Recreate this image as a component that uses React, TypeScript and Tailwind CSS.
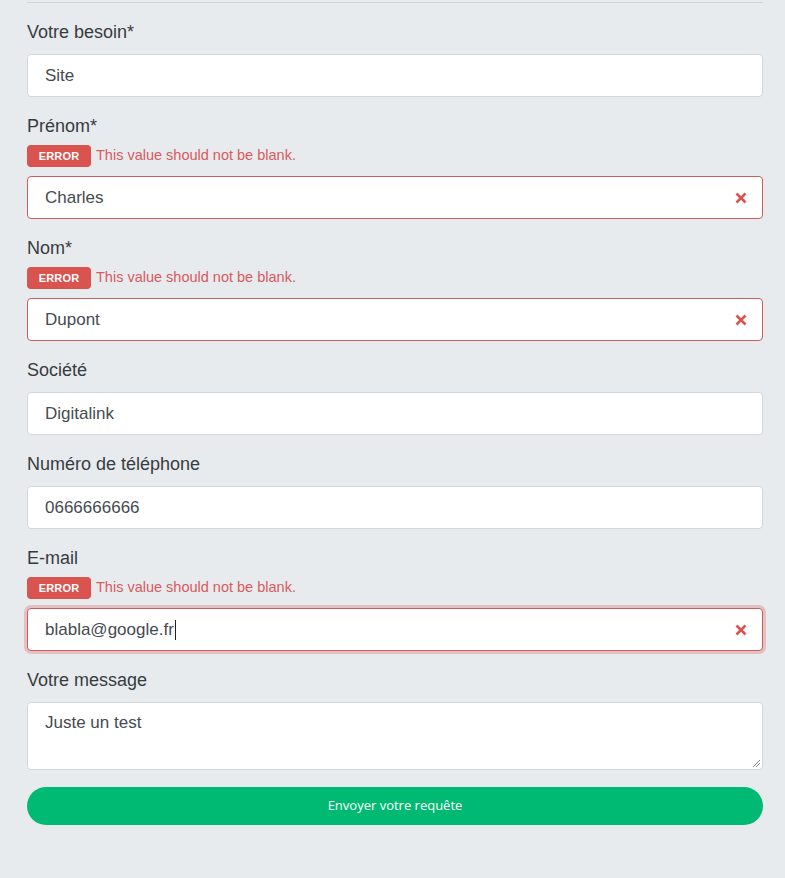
import React from "react";

const XIcon = () => (
  <svg width="12" height="12" viewBox="0 0 12 12" className="shrink-0">
    <path d="M1.5 1.5 L10.5 10.5 M10.5 1.5 L1.5 10.5" stroke="#d9534f" strokeWidth="2.6" strokeLinecap="butt" />
  </svg>
);

type FieldProps = {
  label: string;
  value: string;
  error?: boolean;
  focus?: boolean;
  caret?: boolean;
};

const Field = ({ label, value, error, focus, caret }: FieldProps) => (
  <div className="mb-[17px]">
    <div className={`text-[18px] leading-[24px] text-[#373b3f] ${error ? "mb-[7px]" : "mb-[10px]"}`}>{label}</div>
    {error && (
      <div className="flex items-center mb-[9px] h-[22px]">
        <span className="inline-flex items-center justify-center w-[64px] h-[22px] rounded-[4px] bg-[#d9534f] text-white text-[11px] font-bold tracking-[0.2px]">
          ERROR
        </span>
        <span className="ml-[5px] text-[14.5px] text-[#d75a5f]">This value should not be blank.</span>
      </div>
    )}
    <div
      className={`flex items-center h-[43px] rounded-[4px] bg-white pl-[17px] pr-[15px] border ${
        error ? "border-[#cf5b5b]" : "border-[#d3d7db]"
      } ${focus ? "shadow-[0_0_0_3px_rgba(217,83,79,0.28)]" : ""}`}
    >
      <span className="flex-1 text-[17px] text-[#464b50] flex items-center">
        {value}
        {caret && <span className="inline-block w-[1px] h-[20px] bg-[#222] ml-[1px]" />}
      </span>
      {error && <XIcon />}
    </div>
  </div>
);

export default function App() {
  return (
    <div className="min-h-[878px] bg-[#e8ebee] pl-[27px] pr-[22px] pt-[2px] pb-[40px] font-['Liberation_Sans',Arial,sans-serif]">
      <div className="h-[1px] bg-[#d3d6d9] mb-[17px]" />
      <Field label="Votre besoin*" value="Site" />
      <Field label="Prénom*" value="Charles" error />
      <Field label="Nom*" value="Dupont" error />
      <Field label="Société" value="Digitalink" />
      <Field label="Numéro de téléphone" value="0666666666" />
      <Field label="E-mail" value="blabla@google.fr" error focus caret />
      <div className="mb-[17px]">
        <div className="text-[18px] leading-[24px] text-[#373b3f] mb-[10px]">Votre message</div>
        <div className="relative h-[68px] rounded-[4px] bg-white border border-[#d3d7db] pl-[17px] pt-[10px] text-[17px] leading-[20px] text-[#464b50]">
          Juste un test
          <svg width="9" height="9" viewBox="0 0 9 9" className="absolute right-[1px] bottom-[1px]">
            <path d="M8 1 L1 8 M8 4 L4 8" stroke="#888" strokeWidth="1" />
          </svg>
        </div>
      </div>
      <button className="w-full h-[38px] rounded-[19px] bg-[#00b972] text-white text-[13px] font-['Open_Sans',sans-serif] flex items-center justify-center">
        Envoyer votre requête
      </button>
    </div>
  );
}
